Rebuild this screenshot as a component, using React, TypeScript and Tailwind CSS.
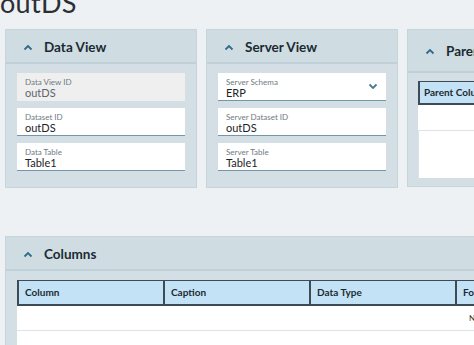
import { ReactNode } from 'react';

const font = { fontFamily: 'Lato, "Open Sans", sans-serif' };

function Chevron({ down = false }: { down?: boolean }) {
  return (
    <svg width="10" height="7" viewBox="0 0 10 7" className={down ? 'rotate-180' : ''}>
      <path d="M1.5 5.5 L5 2 L8.5 5.5" fill="none" stroke="currentColor" strokeWidth="1.8" />
    </svg>
  );
}

function PanelHeader({ title, tall = false }: { title: string; tall?: boolean }) {
  return (
    <div
      className={`flex items-center gap-[11px] pl-[17px] border-b-2 border-[#bfd0d8] bg-[#cfdde3] ${
        tall ? 'h-[43px] pt-[2px]' : 'h-[34px] pt-[3px]'
      }`}
    >
      <span className="text-[#2d6c8a]">
        <Chevron />
      </span>
      <span className="text-[13.5px] font-bold text-[#1b2a32] whitespace-nowrap">{title}</span>
    </div>
  );
}

function Field({
  label,
  value,
  disabled = false,
  select = false,
}: {
  label: string;
  value: string;
  disabled?: boolean;
  select?: boolean;
}) {
  return (
    <div
      className={`relative h-[28px] px-2 pt-[4px] ${
        disabled ? 'bg-[#efefef]' : 'bg-white border-b border-[#7596a8]'
      }`}
    >
      <div className="text-[8px] leading-[10px] text-[#6f7a80]">{label}</div>
      <div className={`text-[11px] leading-[12px] ${disabled ? 'text-[#5e666b]' : 'text-[#1c2328]'}`}>{value}</div>
      {select && (
        <span className="absolute right-[8px] top-[10px] text-[#4e7890]">
          <Chevron down />
        </span>
      )}
    </div>
  );
}

function Panel({ title, children }: { title: string; children: ReactNode }) {
  return (
    <div className="w-[192px] h-[159px] shrink-0 bg-[#d3dfe5] border border-[#c6d5dc]">
      <PanelHeader title={title} />
      <div className="flex flex-col gap-[7px] px-[11px] pt-[9px]">{children}</div>
    </div>
  );
}

function HeadCell({ children, last = false }: { children: ReactNode; last?: boolean }) {
  return (
    <div
      className={`h-full flex items-center px-[6px] text-[10px] font-bold text-[#1b2a32] whitespace-nowrap border-r-2 border-[#3c4b55] ${
        last ? 'w-[60px]' : 'w-[146px]'
      } shrink-0`}
    >
      {children}
    </div>
  );
}

export default function App() {
  return (
    <div className="w-[474px] h-[345px] overflow-hidden bg-[#eef1f4] text-[#1b2a32]" style={font}>
      <div className="h-[29px] overflow-hidden">
        <div className="-mt-[14px] text-[27px] leading-[34px] text-[#2a2f33] tracking-[0.3px]">outDS</div>
      </div>

      <div className="flex gap-[9px] pl-[5px]">
        <Panel title="Data View">
          <Field label="Data View ID" value="outDS" disabled />
          <Field label="Dataset ID" value="outDS" />
          <Field label="Data Table" value="Table1" />
        </Panel>
        <Panel title="Server View">
          <Field label="Server Schema" value="ERP" select />
          <Field label="Server Dataset ID" value="outDS" />
          <Field label="Server Table" value="Table1" />
        </Panel>
        <div className="w-[192px] h-[158px] shrink-0 bg-[#d3dfe5] border border-[#c6d5dc]">
          <PanelHeader title="Parent Columns" tall />
          <div className="pl-[10px] pt-[8px]">
            <div className="h-[24px] flex bg-[#c4e2f5] border-l-2 border-t border-b-2 border-[#3c4b55]">
              <div className="h-full flex items-center px-[4px] text-[10px] font-bold whitespace-nowrap">
                Parent Columns
              </div>
            </div>
            <div className="h-[26px] bg-white border-b border-[#dde3e6]" />
            <div className="h-[47px] bg-white border-l border-[#dde3e6]" />
          </div>
        </div>
      </div>

      <div className="mt-[48px] ml-[5px] w-[480px] h-[120px] bg-[#d3dfe5] border border-[#c6d5dc]">
        <PanelHeader title="Columns" />
        <div className="pl-[11px] pt-[9px]">
          <div className="h-[26px] flex bg-[#c4e2f5] border-l-2 border-t border-b-2 border-[#3c4b55]">
            <HeadCell>Column</HeadCell>
            <HeadCell>Caption</HeadCell>
            <HeadCell>Data Type</HeadCell>
            <HeadCell last>Format</HeadCell>
          </div>
          <div className="h-[25px] bg-white border-b border-[#dde3e6] flex items-center pl-[452px] text-[8px] text-[#333]">
            No
          </div>
          <div className="h-[20px] bg-white" />
        </div>
      </div>
    </div>
  );
}
